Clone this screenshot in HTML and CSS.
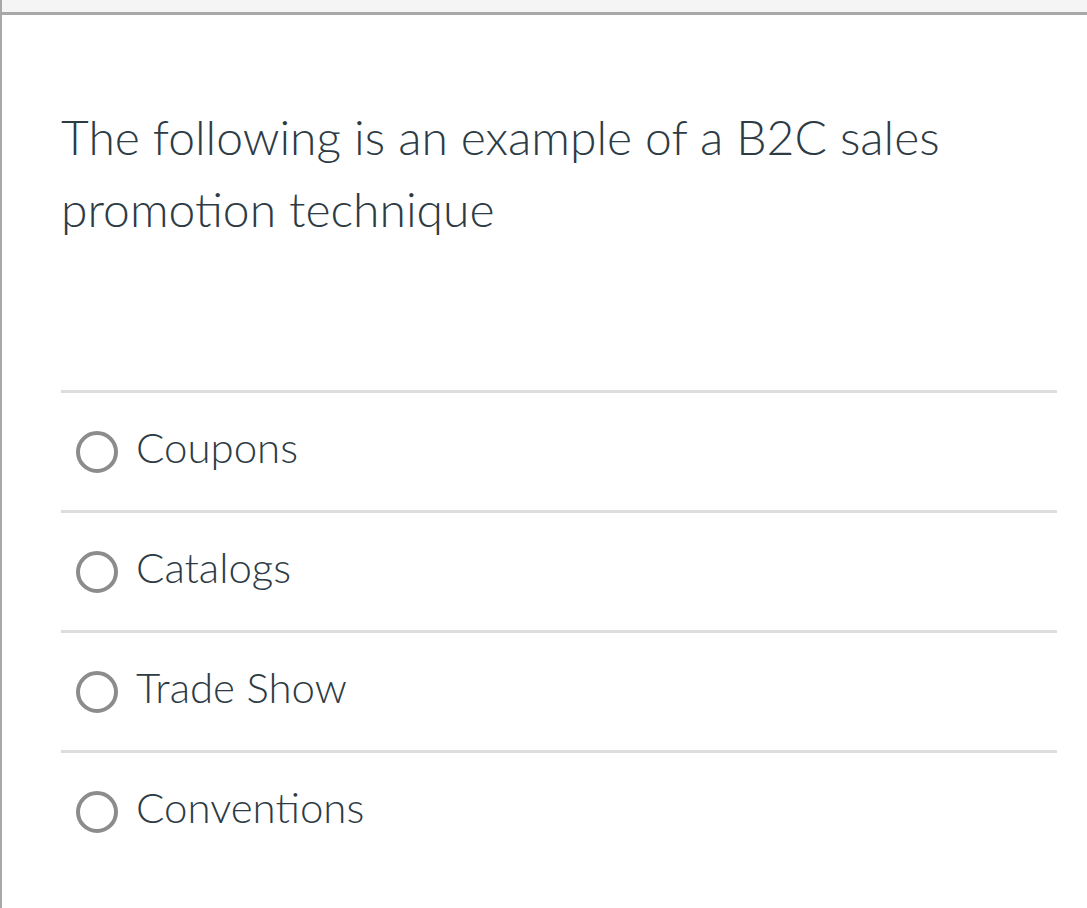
FILE: index.html
```html
<!DOCTYPE html>
<html>
<head>
<meta charset="utf-8">
<link rel="stylesheet" href="styles.css">
</head>
<body>
<div class="topbar"></div>
<div class="quiz">
  <div class="question">The following is an example of a B2C sales promotion technique</div>
  <div class="answers">
    <label class="answer"><span class="radio"></span><span class="label">Coupons</span></label>
    <label class="answer"><span class="radio"></span><span class="label">Catalogs</span></label>
    <label class="answer"><span class="radio"></span><span class="label">Trade Show</span></label>
    <label class="answer"><span class="radio"></span><span class="label">Conventions</span></label>
  </div>
</div>
</body>
</html>
```
FILE: styles.css
```css
html, body {
  margin: 0;
  padding: 0;
  background: #ffffff;
  height: 100%;
}
body {
  font-family: Lato, "Open Sans", sans-serif;
  color: #2d3b45;
  overflow: hidden;
}
.topbar {
  height: 12px;
  background: #f5f5f5;
  border-bottom: 3px solid #a8a8a8;
  border-left: 2px solid #a8a8a8;
}
.quiz {
  box-sizing: border-box;
  border-left: 2px solid #a8a8a8;
  padding: 86px 30px 0 59px;
  height: calc(100% - 15px);
}
.question {
  font-size: 48px;
  font-weight: 300;
  line-height: 72px;
  max-width: 960px;
}
.answers {
  margin-top: 145px;
}
.answer {
  display: flex;
  align-items: center;
  height: 117px;
  border-top: 3px solid #dddddd;
}
.radio {
  width: 34px;
  height: 34px;
  border: 4px solid #8c8c8c;
  border-radius: 50%;
  margin-left: 15px;
  flex: none;
}
.label {
  margin-left: 18px;
  font-size: 42px;
  font-weight: 300;
  position: relative;
  top: -5px;
}
```
